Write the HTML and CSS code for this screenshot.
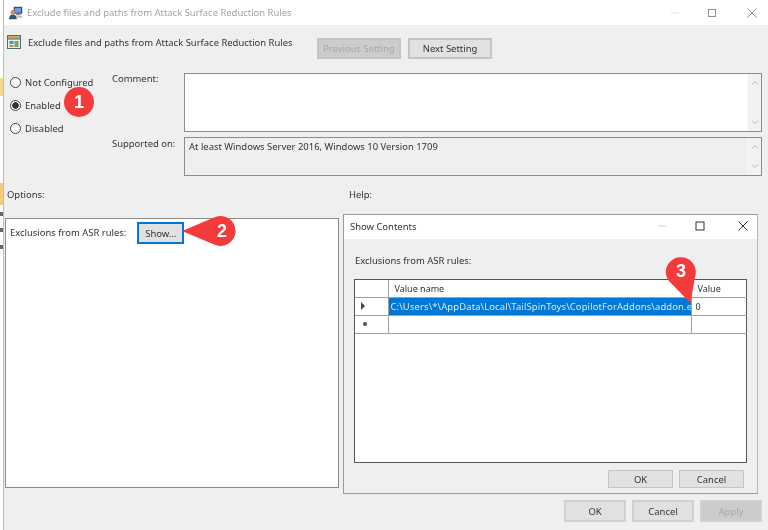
FILE: index.html
```html
<!DOCTYPE html>
<html lang="en">
<head>
<meta charset="UTF-8">
<meta name="viewport" content="width=device-width, initial-scale=1.0">
<title>Exclude files and paths from Attack Surface Reduction Rules</title>
<link rel="stylesheet" href="styles.css">
</head>
<body>

<div class="screen">
    <div class="desktop-edge"></div>

    <div class="window">
        <div class="titlebar">
            <svg class="title-icon" width="14" height="14" viewBox="0 0 18 18">
                <rect x="6" y="1" width="11" height="9" fill="#2c4a7c"/>
                <rect x="7.5" y="2.5" width="8" height="6" fill="#6f9bd8"/>
                <rect x="9" y="10" width="6" height="2" fill="#8a8f98"/>
                <circle cx="5" cy="8" r="3" fill="#c98f5e"/>
                <path d="M0 17c0-4 2-6 5-6s5 2 5 6z" fill="#33507f"/>
                <rect x="10" y="13" width="7" height="2" fill="#b5b9c0"/>
            </svg>
            <span class="title-text">Exclude files and paths from Attack Surface Reduction Rules</span>
            <div class="caption">
                <svg width="10" height="10" viewBox="0 0 10 10"><path d="M1 5h8" stroke="#ddd"/></svg>
                <svg width="10" height="10" viewBox="0 0 10 10"><rect x="1.5" y="1.5" width="7" height="7" fill="none" stroke="#8f8f8f"/></svg>
                <svg class="caption-close" width="10" height="10" viewBox="0 0 10 10"><path d="M.5.5l9 9M9.5.5l-9 9" stroke="#8f8f8f"/></svg>
            </div>
        </div>

        <div class="main">
            <div class="head">
                <div class="head-title">
                    <svg width="14" height="14" viewBox="0 0 14 14">
                        <rect width="14" height="14" fill="#4d6f73"/>
                        <rect x="1" y="1" width="12" height="2.5" fill="#c9a75c"/>
                        <rect x="1" y="4.5" width="12" height="8.5" fill="#e6eef0"/>
                        <rect x="2.5" y="6" width="4" height="3" fill="#5d8f9a"/>
                        <rect x="7.5" y="6" width="4" height="6" fill="#7da06a"/>
                        <rect x="2.5" y="10" width="4" height="2" fill="#b88c5a"/>
                    </svg>
                    <span>Exclude files and paths from Attack Surface Reduction Rules</span>
                </div>
                <div class="btn btn-off btn-nav">Previous Setting</div>
                <div class="btn btn-nav">Next Setting</div>
            </div>

            <div class="settings">
                <div class="radios">
                    <div class="radio"><i></i>Not Configured</div>
                    <div class="radio radio-on"><i></i>Enabled</div>
                    <div class="radio"><i></i>Disabled</div>
                </div>
                <div class="fields">
                    <div class="field field-comment">
                        <label>Comment:</label>
                        <div class="box box-white">
                            <div class="box-text"></div>
                            <div class="scroll">
                                <svg width="8" height="6" viewBox="0 0 8 6"><path d="M1 4.5l3-3 3 3" fill="none" stroke="#b5b5b5"/></svg>
                                <svg width="8" height="6" viewBox="0 0 8 6"><path d="M1 1.5l3 3 3-3" fill="none" stroke="#b5b5b5"/></svg>
                            </div>
                        </div>
                    </div>
                    <div class="field field-support">
                        <label>Supported on:</label>
                        <div class="box">
                            <div class="box-text">At least Windows Server 2016, Windows 10 Version 1709</div>
                            <div class="scroll">
                                <svg width="8" height="6" viewBox="0 0 8 6"><path d="M1 4.5l3-3 3 3" fill="none" stroke="#b5b5b5"/></svg>
                                <svg width="8" height="6" viewBox="0 0 8 6"><path d="M1 1.5l3 3 3-3" fill="none" stroke="#b5b5b5"/></svg>
                            </div>
                        </div>
                    </div>
                </div>
            </div>

            <div class="section-labels">
                <span class="options-label">Options:</span>
                <span>Help:</span>
            </div>

            <div class="panels">
                <div class="options-panel">
                    <span>Exclusions from ASR rules:</span>
                    <div class="btn btn-focus">Show...</div>
                </div>
            </div>

            <div class="footer">
                <div class="btn btn-foot">OK</div>
                <div class="btn btn-foot">Cancel</div>
                <div class="btn btn-foot btn-off">Apply</div>
            </div>
        </div>
    </div>

    <div class="dialog">
        <div class="dialog-bar">
            <span>Show Contents</span>
            <div class="dialog-caption">
                <svg width="10" height="10" viewBox="0 0 10 10"><path d="M1 5h8" stroke="#ccc"/></svg>
                <svg width="10" height="10" viewBox="0 0 10 10"><rect x="1" y="1" width="8" height="8" fill="none" stroke="#333"/></svg>
                <svg class="dialog-close" width="10" height="10" viewBox="0 0 10 10"><path d="M.5.5l9 9M9.5.5l-9 9" stroke="#333"/></svg>
            </div>
        </div>
        <div class="dialog-body">
            <div class="dialog-label">Exclusions from ASR rules:</div>
            <div class="grid">
                <table>
                    <tr class="row-head">
                        <td class="gutter"></td>
                        <td class="col-name">Value name</td>
                        <td class="col-value">Value</td>
                    </tr>
                    <tr>
                        <td class="gutter"><span class="arrow"></span></td>
                        <td class="cell-selected">C:\Users\*\AppData\Local\TailSpinToys\CopilotForAddons\addon.exe</td>
                        <td>0</td>
                    </tr>
                    <tr>
                        <td class="gutter"><span class="dot"></span></td>
                        <td></td>
                        <td></td>
                    </tr>
                </table>
            </div>
            <div class="dialog-footer">
                <div class="btn btn-small">OK</div>
                <div class="btn btn-small">Cancel</div>
            </div>
        </div>
    </div>

    <svg class="badge badge-1" width="30" height="30" viewBox="0 0 30 30">
        <circle cx="15" cy="15" r="15"/>
        <text x="15" y="21">1</text>
    </svg>
    <svg class="badge badge-2" width="56" height="30" viewBox="0 0 56 30">
        <path d="M0 15L32 1.5a15 15 0 1 1 0 27z"/>
        <text x="40" y="21">2</text>
    </svg>
    <svg class="badge badge-3" width="32" height="48" viewBox="0 0 32 48">
        <path d="M25.5 47L3 24a15 15 0 1 1 27 -3z"/>
        <text x="16" y="21">3</text>
    </svg>
</div>

</body>
</html>
```

FILE: styles.css
```css
* {
    box-sizing: border-box;
}

body {
    margin: 0;
    font-family: "Noto Sans", Arial, sans-serif;
    font-size: 9.45px;
    color: #333;
    background-color: #fff;
    overflow: hidden;
}

.screen {
    position: relative;
    display: flex;
    width: 768px;
    height: 530px;
    overflow: hidden;
    filter: blur(0.4px);
}

.desktop-edge {
    width: 3px;
    flex: none;
    background: linear-gradient(#fff 0 78px, #f5d98a 78px 96px, #fff 96px 183px, #f3cd78 183px 205px, #fff 205px 212px, #666 212px 216px, #fff 216px 228px, #666 228px 232px, #fff 232px 245px, #666 245px 249px, #fff 249px);
}

.window {
    flex: 1;
    display: flex;
    flex-direction: column;
    border-left: 1px solid #bdbdbd;
}

.titlebar {
    height: 25px;
    flex: none;
    display: flex;
    align-items: center;
    padding-left: 5px;
    background-color: #fff;
}

.title-icon {
    flex: none;
    margin-right: 4px;
}

.title-text {
    color: #a3a3a3;
    white-space: nowrap;
}

.caption {
    margin-left: auto;
    display: flex;
    gap: 27px;
    padding-right: 11px;
}

.caption-close {
    margin-left: 3px;
}

.main {
    flex: 1;
    display: flex;
    flex-direction: column;
    padding: 13px 6px 8px 1px;
    background-color: #efefef;
}

.head {
    display: flex;
    align-items: flex-start;
    gap: 7px;
    height: 35px;
}

.head-title {
    width: 310px;
    margin-left: 2px;
    margin-right: -7px;
    display: flex;
    align-items: center;
    gap: 7px;
    height: 8px;
    white-space: nowrap;
}

.head-title svg {
    flex: none;
}

.btn {
    display: flex;
    align-items: center;
    justify-content: center;
    background-color: #e1e1e1;
    border: 1px solid #adadad;
    white-space: nowrap;
}

.btn-off {
    background-color: #ccc;
    border-color: #bfbfbf;
    color: #a8a8a8;
}

.btn-nav {
    width: 84px;
    height: 21px;
    border-width: 2px;
    border-color: #c4c4c4;
}

.settings {
    display: flex;
    height: 103px;
}

.radios {
    width: 107px;
    flex: none;
    padding: 0 0 0 5px;
}

.radio {
    height: 23px;
    display: flex;
    align-items: center;
    gap: 4px;
    position: relative;
    top: -2px;
}

.radio i {
    width: 11px;
    height: 11px;
    border-radius: 50%;
    border: 1px solid #444;
    background-color: #fff;
}

.radio-on i {
    background: radial-gradient(circle, #333 0 3px, #fff 3.5px);
}

.fields {
    flex: 1;
    display: flex;
    flex-direction: column;
    gap: 5px;
}

.field {
    display: flex;
}

.field label {
    width: 72px;
    flex: none;
    line-height: 12px;
}

.field-comment {
    height: 60px;
}

.field-support {
    height: 39px;
}

.field-support label {
    padding-top: 1px;
}

.box {
    flex: 1;
    display: flex;
    border: 1px solid #8c8c8c;
    background-color: #efefef;
}

.box-white {
    background-color: #fff;
}

.box-text {
    flex: 1;
    padding: 2px 4px;
    line-height: 14px;
}

.scroll {
    width: 14px;
    flex: none;
    display: flex;
    flex-direction: column;
    justify-content: space-between;
    align-items: center;
    padding: 6px 0;
    background-color: #f2f2f2;
    border-left: 1px solid #f8f8f8;
}

.section-labels {
    display: flex;
    height: 40px;
    margin-top: 2px;
    padding: 10px 0 0 2px;
}

.options-label {
    width: 342px;
}

.panels {
    flex: 1;
    display: flex;
}

.options-panel {
    width: 334px;
    height: 270px;
    display: flex;
    align-items: flex-start;
    gap: 11px;
    padding: 3px 0 0 4px;
    background-color: #fff;
    border: 1px solid #8c8c8c;
}

.options-panel span {
    line-height: 22px;
}

.btn-focus {
    width: 47px;
    height: 22px;
    border: 2px solid #0078d7;
}

.footer {
    display: flex;
    justify-content: flex-end;
    gap: 6px;
    height: 22px;
}

.btn-foot {
    width: 62px;
    height: 22px;
    border-width: 2px;
    border-color: #d0d0d0;
}

.dialog {
    position: absolute;
    left: 343px;
    top: 214px;
    width: 415px;
    height: 280px;
    display: flex;
    flex-direction: column;
    border: 1px solid #9a9a9a;
    border-right-color: #b5b5b5;
    background-color: #efefef;
}

.dialog-bar {
    height: 24px;
    flex: none;
    display: flex;
    align-items: center;
    padding: 0 0 2px 6px;
    background-color: #fff;
}

.dialog-caption {
    margin-left: auto;
    display: flex;
    gap: 28px;
    padding-right: 9px;
}

.dialog-close {
    margin-left: 5px;
}

.dialog-body {
    flex: 1;
    display: flex;
    flex-direction: column;
    padding: 15px 10px 0;
}

.dialog-label {
    height: 25px;
    padding-left: 1px;
    line-height: 14px;
}

.grid {
    height: 184px;
    background-color: #fff;
    border: 1px solid #555;
}

.grid table {
    width: 392px;
    border-collapse: collapse;
    table-layout: fixed;
    font-size: 9px;
}

.grid td {
    height: 18px;
    padding: 0 4px;
    border: 1px solid #a0a0a0;
    white-space: nowrap;
    overflow: hidden;
}

.grid tr:first-child td {
    height: 17px;
    border-top: 0;
}

.grid td:first-child {
    border-left: 0;
}

.grid td:last-child {
    border-right: 0;
}

.grid .gutter {
    width: 33px;
}

.col-value {
    width: 56px;
}

.row-head .col-name {
    padding-left: 6px;
}

.row-head .col-value {
    padding-left: 6px;
}

.grid .cell-selected {
    background-color: #0078d7;
    color: #dbe9f6;
    padding-left: 2px;
    font-size: 9.45px;
    letter-spacing: 0.12px;
}

.arrow {
    display: block;
    margin-left: 2px;
    width: 0;
    height: 0;
    border-left: 4px solid #444;
    border-top: 4px solid transparent;
    border-bottom: 4px solid transparent;
}

.dot {
    display: block;
    margin-left: 4px;
    width: 4px;
    height: 4px;
    border-radius: 50%;
    background-color: #555;
}

.dialog-footer {
    display: flex;
    justify-content: flex-end;
    gap: 6px;
    padding: 7px 3px 0 0;
}

.btn-small {
    width: 65px;
    height: 18px;
    border-color: #c4c4c4;
}

.badge {
    position: absolute;
    fill: #f43b3c;
}

.badge text {
    fill: #fff;
    font-family: "Liberation Sans", Arial, sans-serif;
    font-size: 18px;
    font-weight: bold;
    text-anchor: middle;
}

.badge-1 {
    left: 64px;
    top: 87px;
}

.badge-2 {
    left: 182px;
    top: 216px;
}

.badge-3 {
    left: 665px;
    top: 256px;
}
```
